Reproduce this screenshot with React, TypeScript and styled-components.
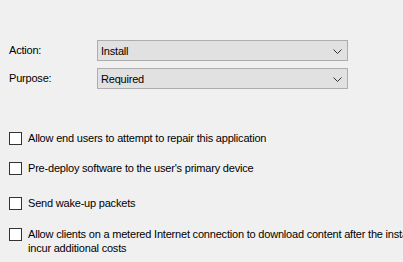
import React from "react";
import styled, { createGlobalStyle } from "styled-components";

const Global = createGlobalStyle`
  html, body {
    margin: 0;
    padding: 0;
    background: #f0f0f0;
    overflow: hidden;
  }
  body {
    font-family: "Liberation Sans", Arial, sans-serif;
    font-size: 11px;
    letter-spacing: -0.2px;
    color: #000;
  }
`;

const Page = styled.div`
  width: 403px;
  height: 262px;
  padding: 40px 0 0 9px;
  box-sizing: border-box;
  background: #f0f0f0;
  overflow: hidden;
`;

const Form = styled.div`
  display: grid;
  grid-template-columns: 88px 251px;
  row-gap: 7px;
  align-items: center;
`;

const Label = styled.div`
  line-height: 21px;
  white-space: nowrap;
`;

const Combo = styled.div`
  position: relative;
  height: 21px;
  box-sizing: border-box;
  border: 1px solid #adadad;
  background: #e1e1e1;
  display: flex;
  align-items: center;
  padding-left: 3px;
  white-space: nowrap;
`;

const Chevron = styled.svg`
  position: absolute;
  right: 5px;
  top: 8px;
`;

const Checks = styled.div`
  display: flex;
  flex-direction: column;
  margin-top: 43px;
  width: 700px;
`;

const CheckRow = styled.div<{ $top: number }>`
  display: flex;
  align-items: flex-start;
  margin-top: ${(p) => p.$top}px;
  &:first-child {
    margin-top: 0;
  }
`;

const Box = styled.span`
  flex: none;
  width: 13px;
  height: 13px;
  box-sizing: border-box;
  border: 1px solid #333333;
  background: #ffffff;
`;

const CheckText = styled.span`
  margin-left: 6px;
  line-height: 14px;
  margin-top: -1px;
  white-space: nowrap;
`;

const ComboBox = ({ value }: { value: string }) => (
  <Combo>
    {value}
    <Chevron width="9" height="5" viewBox="0 0 9 5">
      <path d="M0.5 0.5 L4.5 4.5 L8.5 0.5" fill="none" stroke="#333" strokeWidth="1" />
    </Chevron>
  </Combo>
);

export default function App() {
  return (
    <Page>
      <Global />
      <Form>
        <Label>Action:</Label>
        <ComboBox value="Install" />
        <Label>Purpose:</Label>
        <ComboBox value="Required" />
      </Form>
      <Checks>
        <CheckRow $top={0}>
          <Box />
          <CheckText>Allow end users to attempt to repair this application</CheckText>
        </CheckRow>
        <CheckRow $top={17}>
          <Box />
          <CheckText>Pre-deploy software to the user's primary device</CheckText>
        </CheckRow>
        <CheckRow $top={22}>
          <Box />
          <CheckText>Send wake-up packets</CheckText>
        </CheckRow>
        <CheckRow $top={18}>
          <Box />
          <CheckText>
            Allow clients on a metered Internet connection to download content after the installation deadline, which might
            <br />
            incur additional costs
          </CheckText>
        </CheckRow>
      </Checks>
    </Page>
  );
}
